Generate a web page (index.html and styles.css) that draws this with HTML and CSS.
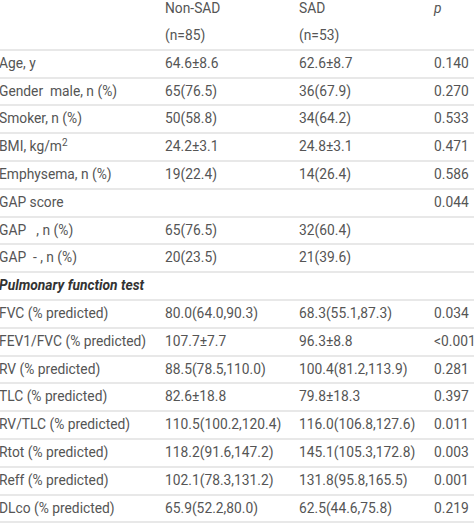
FILE: index.html
```html
<!DOCTYPE html>
<html>
<head>
<meta charset="utf-8">
<link rel="stylesheet" href="styles.css">
</head>
<body>
<table class="tbl">
  <colgroup>
    <col class="c-label"><col class="c-non"><col class="c-sad"><col class="c-p">
  </colgroup>
  <thead>
    <tr class="head">
      <th></th>
      <th>Non-SAD<br>(n=85)</th>
      <th>SAD<br>(n=53)</th>
      <th><i>p</i></th>
    </tr>
  </thead>
  <tbody>
    <tr><td>Age, y</td><td>64.6±8.6</td><td>62.6±8.7</td><td>0.140</td></tr>
    <tr><td>Gender&nbsp; male, n (%)</td><td>65(76.5)</td><td>36(67.9)</td><td>0.270</td></tr>
    <tr><td>Smoker, n (%)</td><td>50(58.8)</td><td>34(64.2)</td><td>0.533</td></tr>
    <tr><td>BMI, kg/m<sup>2</sup></td><td>24.2±3.1</td><td>24.8±3.1</td><td>0.471</td></tr>
    <tr><td>Emphysema, n (%)</td><td>19(22.4)</td><td>14(26.4)</td><td>0.586</td></tr>
    <tr><td>GAP score</td><td></td><td></td><td>0.044</td></tr>
    <tr><td>GAP &nbsp;&nbsp;, n (%)</td><td>65(76.5)</td><td>32(60.4)</td><td></td></tr>
    <tr><td>GAP &nbsp;- , n (%)</td><td>20(23.5)</td><td>21(39.6)</td><td></td></tr>
    <tr class="section"><td colspan="4">Pulmonary function test</td></tr>
    <tr><td>FVC (% predicted)</td><td>80.0(64.0,90.3)</td><td>68.3(55.1,87.3)</td><td>0.034</td></tr>
    <tr><td>FEV1/FVC (% predicted)</td><td>107.7±7.7</td><td>96.3±8.8</td><td>&lt;0.001</td></tr>
    <tr><td>RV (% predicted)</td><td>88.5(78.5,110.0)</td><td>100.4(81.2,113.9)</td><td>0.281</td></tr>
    <tr><td>TLC (% predicted)</td><td>82.6±18.8</td><td>79.8±18.3</td><td>0.397</td></tr>
    <tr><td>RV/TLC (% predicted)</td><td>110.5(100.2,120.4)</td><td>116.0(106.8,127.6)</td><td>0.011</td></tr>
    <tr><td>Rtot (% predicted)</td><td>118.2(91.6,147.2)</td><td>145.1(105.3,172.8)</td><td>0.003</td></tr>
    <tr><td>Reff (% predicted)</td><td>102.1(78.3,131.2)</td><td>131.8(95.8,165.5)</td><td>0.001</td></tr>
    <tr><td>DLco (% predicted)</td><td>65.9(52.2,80.0)</td><td>62.5(44.6,75.8)</td><td>0.219</td></tr>
  </tbody>
</table>
</body>
</html>
```
FILE: styles.css
```css
html, body {
  margin: 0;
  padding: 0;
  background: #fff;
  overflow: hidden;
}
.tbl {
  border-collapse: collapse;
  table-layout: fixed;
  width: 475px;
  margin: -5px 0 0 -1px;
  font-family: Roboto, "Liberation Sans", sans-serif;
  font-size: 13.8px;
  color: #555;
}
.c-label { width: 166px; }
.c-non { width: 134px; }
.c-sad { width: 135px; }
.c-p { width: 40px; }
.tbl th, .tbl td {
  padding: 0;
  text-align: left;
  vertical-align: middle;
  white-space: nowrap;
  font-weight: normal;
  line-height: 25.8px;
  border-bottom: 2px solid #e8e8e8;
  overflow: visible;
}
.tbl thead th {
  line-height: 26.9px;
  vertical-align: top;
}
.tbl sup {
  font-size: 10px;
  line-height: 0;
  vertical-align: 5px;
}
.section td {
  font-style: italic;
  font-weight: 700;
  color: #333;
}
```
